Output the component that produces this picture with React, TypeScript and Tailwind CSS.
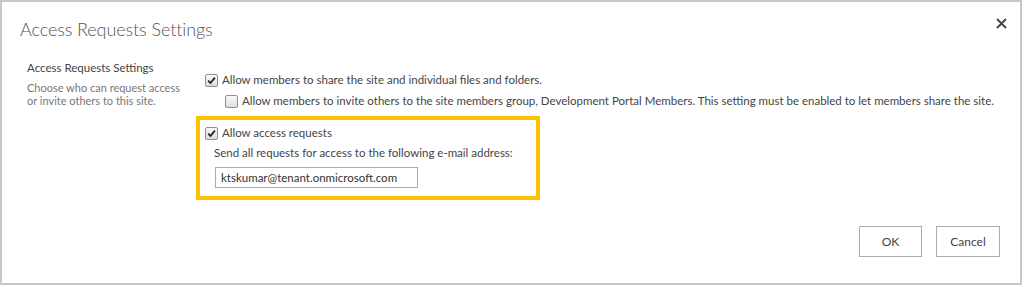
import React from 'react';

const Check = ({ checked }: { checked: boolean }) => (
    <span className="w-[13px] h-[13px] shrink-0 rounded-[2px] border border-[#8f8f8f] bg-gradient-to-b from-[#fafafa] to-[#dcdcdc] flex items-center justify-center">
        {checked && (
            <svg width="9" height="9" viewBox="0 0 9 9">
                <path d="M1.2 4.6 L3.5 7 L7.9 1.6" fill="none" stroke="#222" strokeWidth="1.8" />
            </svg>
        )}
    </span>
);

export default function App() {
    return (
        <div className="w-[1022px] h-[285px] border-2 border-[#c8c8c8] bg-white flex flex-col text-[#444]" style={{ fontFamily: 'Lato, "Open Sans", sans-serif' }}>
            <div className="flex shrink-0 items-start justify-between pl-[18px] pr-[13px] pt-[16px] h-[52px]">
                <h1 className="text-[18px] font-light text-[#555] leading-[22px] tracking-[-0.1px]">Access Requests Settings</h1>
                <svg width="11" height="11" viewBox="0 0 11 11" className="mt-[0px]">
                    <path d="M1 1 L10 10 M10 1 L1 10" stroke="#444" strokeWidth="1.8" />
                </svg>
            </div>

            <div className="flex pl-[25px] pt-[6px]">
                <div className="w-[178px] shrink-0">
                    <div className="text-[11.5px] leading-[16px] text-[#444] whitespace-nowrap">Access Requests Settings</div>
                    <div className="text-[11px] leading-[13px] text-[#777] mt-[5px] whitespace-nowrap">
                        Choose who can request access
                        <br />
                        or invite others to this site.
                    </div>
                </div>

                <div className="flex flex-col pt-[12px]">
                    <label className="flex items-center gap-[4px] text-[11.5px] leading-[16px] whitespace-nowrap">
                        <Check checked />
                        Allow members to share the site and individual files and folders.
                    </label>
                    <label className="flex items-center gap-[4px] text-[11.5px] leading-[16px] ml-[20px] mt-[5px] whitespace-nowrap">
                        <Check checked={false} />
                        Allow members to invite others to the site members group, Development Portal Members. This setting must be enabled to let members share the site.
                    </label>

                    <div className="mt-[7px] -ml-[9px] w-[344px] border-[4px] border-[#fdc300] pl-[5px] pt-[5px] pb-[8px]">
                        <label className="flex items-center gap-[4px] text-[11.5px] leading-[16px] whitespace-nowrap">
                            <Check checked />
                            Allow access requests
                        </label>
                        <div className="text-[11.5px] leading-[16px] ml-[9px] mt-[4px] whitespace-nowrap">Send all requests for access to the following e-mail address:</div>
                        <div className="mt-[6px] ml-[10px] w-[203px] h-[21px] border border-[#ababab] px-[5px] text-[11.5px] leading-[19px] text-[#333] whitespace-nowrap">
                            ktskumar@tenant.onmicrosoft.com
                        </div>
                    </div>
                </div>
            </div>

            <div className="flex justify-end gap-[14px] pr-[20px] mt-auto mb-[26px]">
                <button className="w-[63px] h-[31px] border border-[#ababab] bg-white text-[12px] text-[#444]">OK</button>
                <button className="w-[64px] h-[31px] border border-[#ababab] bg-white text-[12px] text-[#444]">Cancel</button>
            </div>
        </div>
    );
}
